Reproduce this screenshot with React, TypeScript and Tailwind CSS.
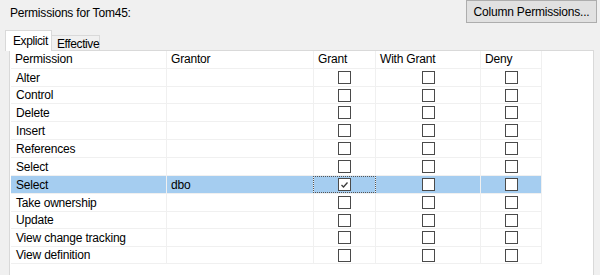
import React from "react";

const rows: { name: string; grantor: string; heights: number }[] = [
  { name: "Alter", grantor: "", heights: 18 },
  { name: "Control", grantor: "", heights: 17 },
  { name: "Delete", grantor: "", heights: 18 },
  { name: "Insert", grantor: "", heights: 18 },
  { name: "References", grantor: "", heights: 18 },
  { name: "Select", grantor: "", heights: 18 },
  { name: "Select", grantor: "dbo", heights: 18 },
  { name: "Take ownership", grantor: "", heights: 18 },
  { name: "Update", grantor: "", heights: 17 },
  { name: "View change tracking", grantor: "", heights: 18 },
  { name: "View definition", grantor: "", heights: 17 },
];

function Box({ checked }: { checked?: boolean }) {
  return (
    <div className="w-[13px] h-[13px] border border-[#4a4a4a] bg-white flex items-center justify-center">
      {checked && (
        <svg width="11" height="11" viewBox="0 0 11 11">
          <polyline
            points="2.5,6 4.5,8 8.5,3.5"
            fill="none"
            stroke="#3c3c3c"
            strokeWidth="1.3"
          />
        </svg>
      )}
    </div>
  );
}

export default function App() {
  return (
    <div
      className="w-[600px] h-[275px] bg-[#f0f0f0] overflow-hidden text-[12px] text-black tracking-[-0.2px]"
      style={{ fontFamily: '"Liberation Sans", Arial, sans-serif' }}
    >
      <div className="flex items-start justify-between h-[30px]">
        <div className="pl-[10px] pt-[6px] leading-[14px]">Permissions for Tom45:</div>
        <div className="mr-[3px] w-[131px] h-[23px] border border-[#adadad] bg-[#e1e1e1] flex items-center justify-center leading-none">
          Column Permissions...
        </div>
      </div>
      <div className="flex items-end pl-[5px] h-[20px] relative z-10">
        <div className="w-[47px] h-[21px] -mb-[1px] border border-b-0 border-[#d9d9d9] bg-white pl-[7px] pt-[3px] leading-[14px] tracking-[-0.4px]">
          Explicit
        </div>
        <div className="w-[48px] h-[15px] border border-l-0 border-b-0 border-[#d9d9d9] bg-[#f0f0f0] pl-[5px] pt-[1px] leading-[14px] tracking-[-0.4px]">
          Effective
        </div>
      </div>
      <div className="ml-[9px] mr-[6px] h-[240px] border border-[#d9d9d9] bg-white pl-[1px]">
        <div className="flex h-[18px] leading-[17px]">
          <div className="w-[156px] pl-[4px] border-r border-b border-[#f0f0f0]">Permission</div>
          <div className="w-[147px] pl-[4px] border-r border-b border-[#f0f0f0]">Grantor</div>
          <div className="w-[62px] pl-[4px] border-r border-b border-[#f0f0f0]">Grant</div>
          <div className="w-[105px] pl-[4px] border-r border-b border-[#f0f0f0]">With Grant</div>
          <div className="w-[61px] pl-[4px] border-r border-b border-[#f0f0f0]">Deny</div>
        </div>
        {rows.map((r, i) => {
          const sel = i === 6;
          return (
            <div
              key={i}
              className={`flex w-[531px] ${sel ? "bg-[#a5cdf0]" : ""}`}
              style={{ height: r.heights }}
            >
              <div className="w-[156px] pl-[5px] border-r border-b border-[#f0f0f0] flex items-center">
                {r.name}
              </div>
              <div className="w-[147px] pl-[4px] border-r border-b border-[#f0f0f0] flex items-center">
                {r.grantor}
              </div>
              <div className="relative w-[62px] border-r border-b border-[#f0f0f0] flex items-center justify-center">
                <Box checked={sel} />
                {sel && (
                  <div className="absolute -left-[1px] right-[-1px] top-0 bottom-0 border border-dotted border-[#555555]" />
                )}
              </div>
              <div className="w-[105px] border-r border-b border-[#f0f0f0] flex items-center justify-center">
                <Box />
              </div>
              <div className="w-[61px] border-r border-b border-[#f0f0f0] flex items-center justify-center">
                <Box />
              </div>
            </div>
          );
        })}
      </div>
    </div>
  );
}
